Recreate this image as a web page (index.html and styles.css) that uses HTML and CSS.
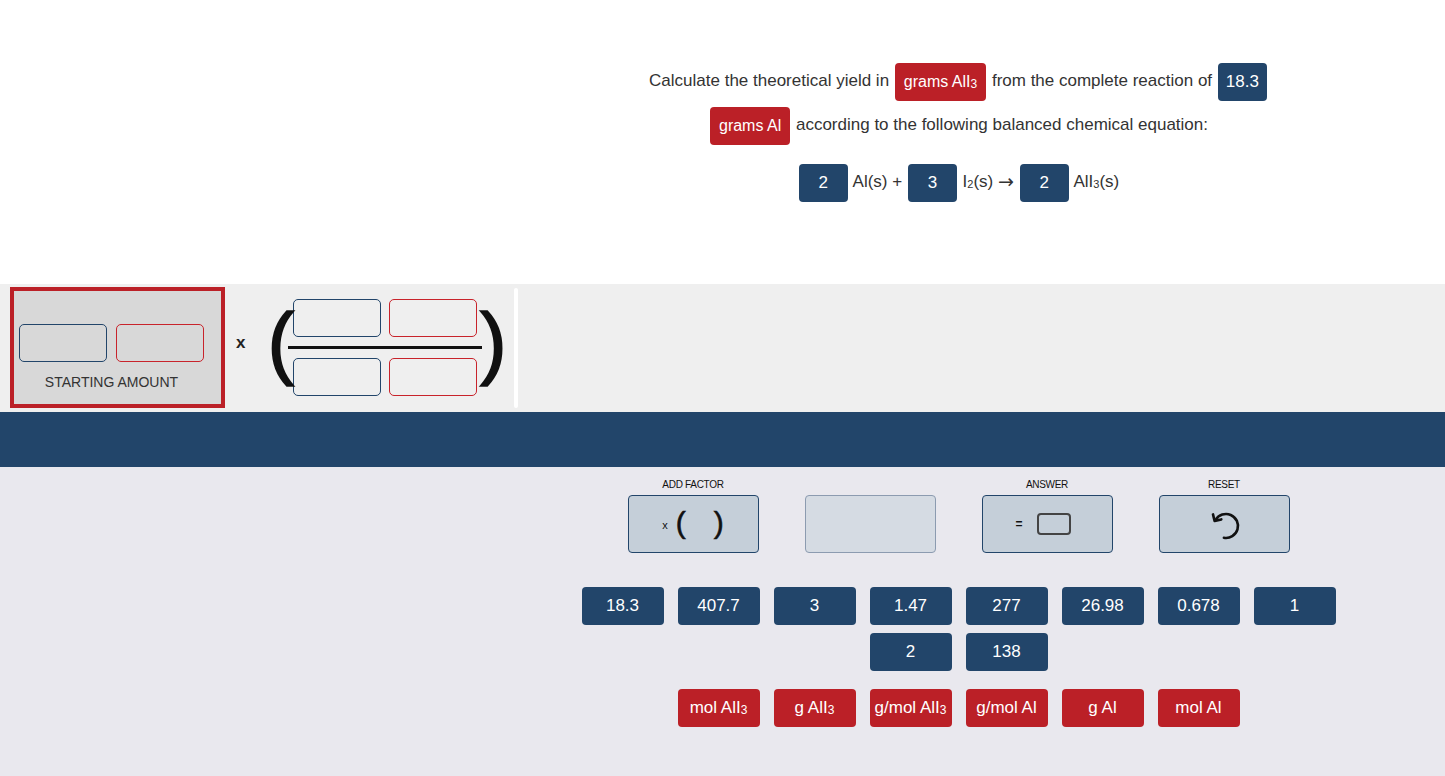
FILE: index.html
```html
<!DOCTYPE html>
<html>
<head>
<meta charset="utf-8">
<link rel="stylesheet" href="styles.css">
</head>
<body>
<div class="page">
  <section class="question">
    <div class="q-wrap">
      <p class="q-text">Calculate the theoretical yield in <span class="chip red">grams AlI<sub>3</sub></span> from the complete reaction of <span class="chip blue">18.3</span><br><span class="chip red">grams Al</span> according to the following balanced chemical equation:</p>
      <p class="eq"><span class="chip blue coef">2</span> Al(s) + <span class="chip blue coef">3</span> I<sub>2</sub>(s) <span class="arrow">→</span> <span class="chip blue coef">2</span> AlI<sub>3</sub>(s)</p>
    </div>
  </section>

  <section class="workspace">
    <div class="start-box">
      <div class="slots">
        <div class="slot slot-blue"></div>
        <div class="slot slot-red"></div>
      </div>
      <div class="start-label">STARTING AMOUNT</div>
    </div>
    <div class="times">x</div>
    <div class="factor">
      <span class="paren paren-l">(</span>
      <div class="frac">
        <div class="slots frac-row">
          <div class="slot slot-blue"></div>
          <div class="slot slot-red"></div>
        </div>
        <div class="frac-bar"></div>
        <div class="slots frac-row">
          <div class="slot slot-blue"></div>
          <div class="slot slot-red"></div>
        </div>
      </div>
      <span class="paren paren-r">)</span>
    </div>
    <div class="divider"></div>
  </section>

  <div class="band"></div>

  <section class="controls">
    <div class="ctrl-inner">
      <div class="ctrl-row">
        <div class="ctrl">
          <div class="ctrl-label">ADD FACTOR</div>
          <div class="ctrl-btn">
            <span class="mini-x">x</span><span class="mini-paren">(</span><span class="mini-paren mini-paren-r">)</span>
          </div>
        </div>
        <div class="ctrl">
          <div class="ctrl-label">&nbsp;</div>
          <div class="ctrl-btn ctrl-btn-off"></div>
        </div>
        <div class="ctrl">
          <div class="ctrl-label">ANSWER</div>
          <div class="ctrl-btn">
            <span class="mini-eq">=</span><span class="mini-box"></span>
          </div>
        </div>
        <div class="ctrl">
          <div class="ctrl-label">RESET</div>
          <div class="ctrl-btn">
            <svg class="reset-icon" width="40" height="36" viewBox="0 0 40 36">
              <path d="M11.6 14 A12 12 0 1 1 19.9 31.8" fill="none" stroke="#111" stroke-width="2.6" stroke-linecap="round"/>
              <path d="M17.3 13.4 L10.6 15 L9 8.4" fill="none" stroke="#111" stroke-width="2.6" stroke-linecap="round" stroke-linejoin="round"/>
            </svg>
          </div>
        </div>
      </div>

      <div class="tiles">
        <div class="tile">18.3</div>
        <div class="tile">407.7</div>
        <div class="tile">3</div>
        <div class="tile">1.47</div>
        <div class="tile">277</div>
        <div class="tile">26.98</div>
        <div class="tile">0.678</div>
        <div class="tile">1</div>
        <div class="tile">2</div>
        <div class="tile">138</div>
      </div>

      <div class="tiles units">
        <div class="tile tile-red">mol AlI<sub>3</sub></div>
        <div class="tile tile-red">g AlI<sub>3</sub></div>
        <div class="tile tile-red">g/mol AlI<sub>3</sub></div>
        <div class="tile tile-red">g/mol Al</div>
        <div class="tile tile-red">g Al</div>
        <div class="tile tile-red">mol Al</div>
      </div>
    </div>
  </section>
</div>
</body>
</html>
```

FILE: styles.css
```css
html, body {
  margin: 0;
  padding: 0;
}

body {
  font-family: "Liberation Sans", Arial, sans-serif;
  color: #333;
  background: #fff;
}

.page {
  width: 1445px;
  height: 776px;
  overflow: hidden;
}

sub {
  font-size: 11px;
  vertical-align: -1px;
  line-height: 0;
}

/* ---------- question ---------- */
.question {
  height: 284px;
  background: #fff;
  display: flex;
}

.q-wrap {
  margin-left: 472px;
  flex: 1;
  text-align: center;
  padding-top: 59px;
}

.q-text {
  margin: 0;
  font-size: 17px;
  line-height: 44px;
}

.eq {
  margin: 13px 0 0;
  font-size: 17px;
  line-height: 44px;
}

.arrow {
  font-family: "DejaVu Sans", sans-serif;
  font-size: 19px;
  line-height: 0;
  vertical-align: -1px;
}

.chip {
  display: inline-block;
  height: 38px;
  line-height: 38px;
  padding: 0 8px;
  border-radius: 4px;
  color: #fff;
  font-size: 16px;
  vertical-align: middle;
  margin: 0 1px;
  box-sizing: border-box;
}

.chip sub {
  font-size: 12px;
}

.chip.red {
  background: #bb2027;
}

.chip.blue {
  background: #22456a;
}

.q-text .chip.blue {
  font-size: 17px;
}

.q-text .chip.red {
  padding: 0 9px;
}

.chip.coef {
  min-width: 49px;
  text-align: center;
  font-size: 17px;
}

/* ---------- workspace ---------- */
.workspace {
  height: 128px;
  box-sizing: border-box;
  background: #efefef;
  display: flex;
  align-items: center;
  padding: 3px 0 4px 10px;
}

.start-box {
  width: 215px;
  height: 121px;
  box-sizing: border-box;
  border: 4px solid #bb2027;
  background: #d8d8d8;
  padding: 33px 0 0 5px;
}

.slots {
  display: flex;
  gap: 9px;
}

.slot {
  width: 88px;
  height: 38px;
  box-sizing: border-box;
  border-radius: 5px;
  border: 1px solid #22456a;
}

.slot-red {
  border-color: #c8232b;
}

.start-label {
  width: 185px;
  margin-top: 13px;
  text-align: center;
  font-size: 14px;
  line-height: 14px;
  color: #333;
}

.times {
  margin-left: 11px;
  font-size: 17px;
  font-weight: bold;
  color: #222;
  margin-top: -10px;
}

.factor {
  display: flex;
  align-items: center;
  margin-left: 22px;
}

.paren {
  font-family: "Liberation Sans", Arial, sans-serif;
  font-size: 80px;
  font-weight: normal;
  line-height: 80px;
  color: #111;
  -webkit-text-stroke: 1.6px #111;
  position: relative;
  top: -6px;
}

.paren-l {
  margin-right: -6px;
}

.paren-r {
  margin-left: -2px;
}

.frac {
  width: 194px;
  display: flex;
  flex-direction: column;
}

.frac-row {
  padding-left: 5px;
  gap: 8px;
}

.frac-bar {
  height: 3px;
  background: #111;
  margin: 9px 0 9px;
}

.divider {
  width: 4px;
  height: 120px;
  background: #fff;
  border-radius: 2px;
  margin-left: 7px;
}

/* ---------- band ---------- */
.band {
  height: 55px;
  background: #22456a;
}

/* ---------- controls ---------- */
.controls {
  height: 309px;
  background: #e9e8ee;
  display: flex;
}

.ctrl-inner {
  margin-left: 472px;
  width: 973px;
  display: flex;
  flex-direction: column;
  align-items: center;
}

.ctrl-row {
  display: flex;
  gap: 46px;
  padding-top: 12px;
}

.ctrl {
  width: 131px;
  display: flex;
  flex-direction: column;
  align-items: center;
}

.ctrl-label {
  font-size: 10px;
  line-height: 12px;
  height: 12px;
  color: #111;
  margin-bottom: 4px;
  letter-spacing: -0.3px;
}

.ctrl-btn {
  width: 131px;
  height: 58px;
  box-sizing: border-box;
  border: 1px solid #22456a;
  border-radius: 4px;
  background: #c5cfd9;
  display: flex;
  align-items: center;
  justify-content: center;
  color: #111;
}

.ctrl-btn-off {
  background: #d5dbe3;
  border-color: #8c9bb0;
}

.mini-x {
  font-size: 11px;
  margin-right: 8px;
  margin-top: 2px;
}

.mini-paren {
  font-size: 30px;
  line-height: 30px;
  margin-top: -3px;
  -webkit-text-stroke: 0.6px #111;
}

.mini-paren-r {
  margin-left: 28px;
}

.mini-eq {
  font-size: 12px;
  font-weight: bold;
  margin-right: 14px;
}

.mini-box {
  width: 34px;
  height: 22px;
  box-sizing: border-box;
  border: 2px solid #444;
  border-radius: 4px;
  margin-right: 8px;
}

.reset-icon {
  display: block;
}

.tiles {
  width: 754px;
  display: flex;
  flex-wrap: wrap;
  justify-content: center;
  gap: 8px 14px;
  margin-top: 34px;
}

.tiles.units {
  margin-top: 18px;
}

.tile {
  width: 82px;
  height: 38px;
  box-sizing: border-box;
  border-radius: 4px;
  background: #22456a;
  color: #fff;
  font-size: 17px;
  display: flex;
  align-items: center;
  justify-content: center;
  white-space: nowrap;
}

.tile-red {
  background: #bb2027;
}

.tile sub {
  margin-top: 4px;
  font-size: 12px;
}
```
